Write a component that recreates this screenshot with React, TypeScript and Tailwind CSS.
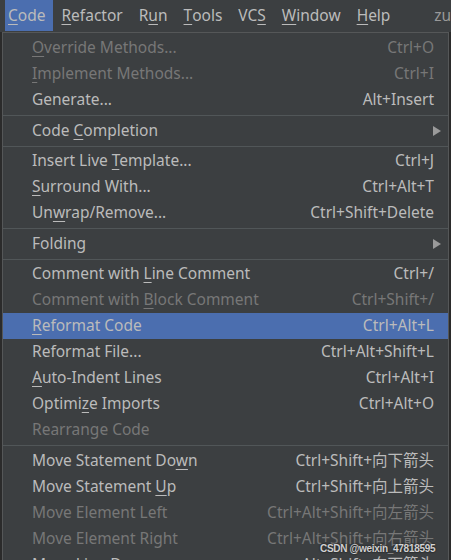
import { Fragment } from "react";

type Item =
  | { sep: true }
  | { sep?: false; label: string; keys?: string; off?: boolean; sub?: boolean; hi?: boolean };

// "_" marks the mnemonic letter
const items: Item[] = [
  { label: "_Override Methods...", keys: "Ctrl+O", off: true },
  { label: "_Implement Methods...", keys: "Ctrl+I", off: true },
  { label: "Generate...", keys: "Alt+Insert" },
  { sep: true },
  { label: "Code _Completion", sub: true },
  { sep: true },
  { label: "Insert Live _Template...", keys: "Ctrl+J" },
  { label: "_Surround With...", keys: "Ctrl+Alt+T" },
  { label: "Un_wrap/Remove...", keys: "Ctrl+Shift+Delete" },
  { sep: true },
  { label: "Folding", sub: true },
  { sep: true },
  { label: "Comment with _Line Comment", keys: "Ctrl+/" },
  { label: "Comment with _Block Comment", keys: "Ctrl+Shift+/", off: true },
  { label: "_Reformat Code", keys: "Ctrl+Alt+L", hi: true },
  { label: "Reformat File...", keys: "Ctrl+Alt+Shift+L" },
  { label: "_Auto-Indent Lines", keys: "Ctrl+Alt+I" },
  { label: "Optimi_ze Imports", keys: "Ctrl+Alt+O" },
  { label: "Rearrange Code", off: true },
  { sep: true },
  { label: "Move Statement Do_wn", keys: "Ctrl+Shift+向下箭头" },
  { label: "Move Statement _Up", keys: "Ctrl+Shift+向上箭头" },
  { label: "Move Element Left", keys: "Ctrl+Alt+Shift+向左箭头", off: true },
  { label: "Move Element Right", keys: "Ctrl+Alt+Shift+向右箭头", off: true },
  { label: "Move Line Down", keys: "Alt+Shift+向下箭头" },
];

const bar = ["_Refactor", "R_un", "_Tools", "VC_S", "_Window", "_Help"];

function Mnemonic({ text }: { text: string }) {
  const i = text.indexOf("_");
  if (i < 0) return <>{text}</>;
  return (
    <>
      {text.slice(0, i)}
      <span className="underline underline-offset-[3px]">{text[i + 1]}</span>
      {text.slice(i + 2)}
    </>
  );
}

export default function App() {
  return (
    <div
      className="relative h-[560px] w-[451px] overflow-hidden bg-[#2b2b2b] text-[15.5px] text-[#bbbbbb]"
      style={{ fontFamily: '"Noto Sans", "Noto Sans CJK SC", sans-serif' }}
    >
      <div className="flex h-[32px] items-center bg-[#3c3f41] pb-[1px]">
        <div className="ml-[5px] flex h-full items-center bg-[#4b6eaf] pl-[3px] pr-[8px]">
          <Mnemonic text="_Code" />
        </div>
        {bar.map((b) => (
          <div key={b} className="flex h-full items-center px-[8px]">
            <Mnemonic text={b} />
          </div>
        ))}
        <div className="ml-auto text-[#999]">zu</div>
      </div>

      <div className="ml-[2px] w-[447px] border border-[#555758] bg-[#3c3f41] pb-2 pt-[2px]">
        {items.map((it, i) =>
          it.sep ? (
            <div key={i} className="mb-[1.5px] mt-[2px] h-px bg-[#515658]" />
          ) : (
            <Fragment key={i}>
              <div
                className={
                  "flex h-[26px] items-center pl-[29px] pr-[14px] " +
                  (it.hi ? "bg-[#4b6eaf] " : "") +
                  (it.off ? "text-[#777777]" : "text-[#bbbbbb]")
                }
              >
                <span className="whitespace-nowrap">
                  <Mnemonic text={it.label} />
                </span>
                <span className="ml-auto whitespace-nowrap">{it.keys}</span>
                {it.sub && (
                  <svg width="8" height="10" viewBox="0 0 8 10" className="-mr-[7px] ml-auto">
                    <path d="M0 0 L8 5 L0 10 Z" fill="#9a9a9a" />
                  </svg>
                )}
              </div>
            </Fragment>
          )
        )}
      </div>

      <div
        className="absolute left-[320px] top-[541px] whitespace-nowrap text-[10px] font-bold tracking-[-0.3px] text-white/80"
        style={{ fontFamily: '"Liberation Sans", sans-serif', textShadow: "0 0 2px #000" }}
      >
        CSDN @weixin_47818595
      </div>
    </div>
  );
}
